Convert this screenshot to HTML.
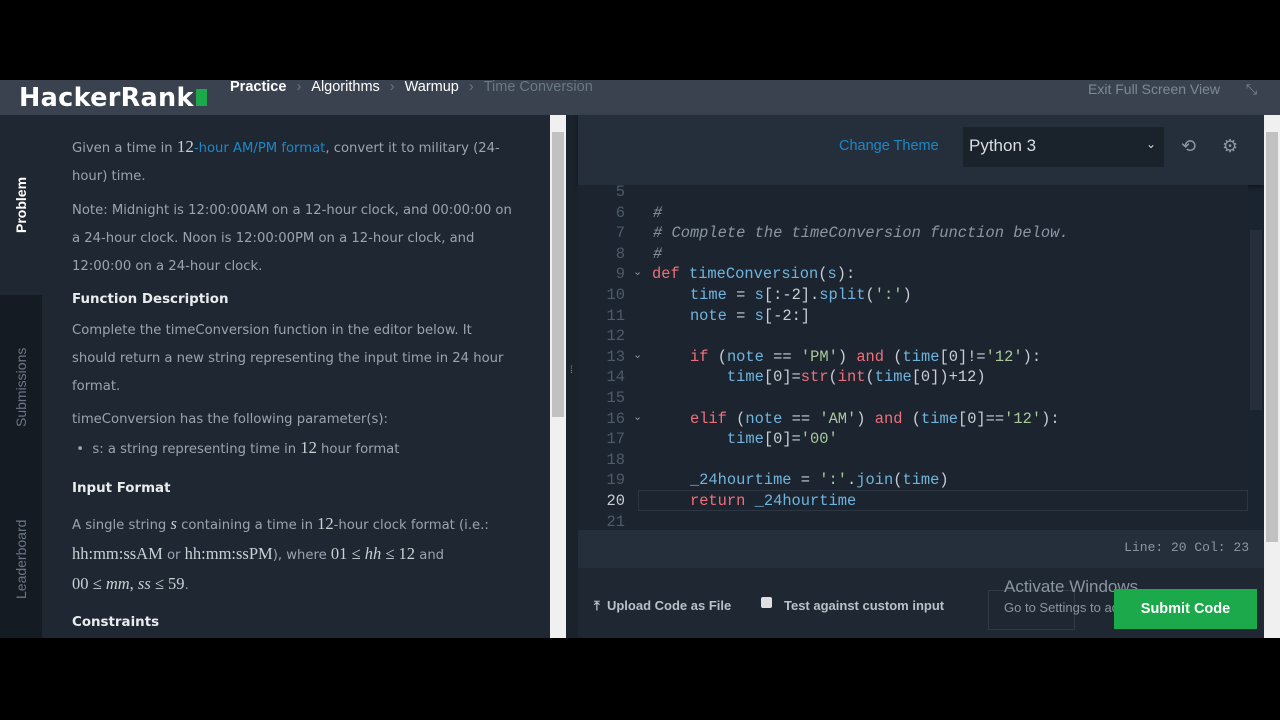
<!DOCTYPE html>
<html><head><meta charset="utf-8"><style>
*{margin:0;padding:0;box-sizing:border-box}
body{width:1280px;height:720px;background:#000;position:relative;overflow:hidden;font-family:"Liberation Sans",sans-serif}
.hdr{position:absolute;left:0;top:80px;width:1280px;height:35px;background:#39424e}
.logo{position:absolute;left:19px;top:3px;font:bold 25.5px "DejaVu Sans",sans-serif;color:#fff;letter-spacing:0.3px}
.logo i{display:inline-block;width:11px;height:17px;background:#1ba94c;margin-left:2px}
.crumb{position:absolute;left:230px;top:0;font-size:14.5px;color:#fff;line-height:15px}
.crumb span{margin-right:10px}.crumb .sep{color:#6b7785}
.exit{position:absolute;left:1088px;top:1px;color:#7c8a96;font-size:14px}
.side{position:absolute;left:0;top:115px;width:42px;height:523px;background:#141b23}
.side div{position:absolute;left:0;width:42px;writing-mode:vertical-rl;transform:rotate(180deg);display:flex;align-items:center;justify-content:center;font-size:14px;color:#6b7785}
.panel{position:absolute;left:42px;top:115px;width:508px;height:523px;background:#1f2732;color:#9aa4ae;font-family:"DejaVu Sans",sans-serif;font-size:13.2px;padding:0 36px 0 30px;overflow:hidden}
.panel p{line-height:28px;margin-top:6px}
.panel h4{color:#e8ecef;font-size:13.4px;margin:8px 0 4px}
.panel a{color:#1e88c7}
.m{font-family:"Liberation Serif",serif;font-size:16.5px;color:#c9d0d6}
.sb{position:absolute;background:#f0f0f0}
.editor{position:absolute;left:578px;top:115px;width:686px;height:523px;background:#1a2330}
.etop{position:absolute;left:0;top:0;width:686px;height:70px;background:#252f3c;box-shadow:0 2px 4px #0006}
.sel{position:absolute;left:385px;top:12px;width:201px;height:40px;background:#1a222c;color:#d8dde2;font-size:17px;padding:9px 6px}
.code{position:absolute;left:0;top:70px;width:670px;height:345px;background:#1c2430;font-family:"Liberation Mono",monospace;font-size:15.4px}
.ln{position:absolute;left:0;width:47px;text-align:right;color:#4f5b68}
.cl{position:absolute;left:75px;white-space:pre;color:#6fb4dc}
.k{color:#f0707a}.s{color:#a9c99a}.p{color:#c8ced4}.c{color:#8b96a1;font-style:italic}
.status{position:absolute;left:0;top:415px;width:686px;height:38px;background:#252f3c;color:#8b96a1;font-family:"Liberation Mono",monospace;font-size:13px;text-align:right;padding:10px 15px}
.bot{position:absolute;left:0;top:453px;width:686px;height:70px;background:#1f2732;color:#b8c0c8;font-size:13px;font-weight:bold}
</style></head><body>
<div class="hdr">
<div class="logo">HackerRank<i></i></div>
<div class="crumb" style="top:0px"><span style="font-weight:bold">Practice</span><span class="sep">›</span><span>Algorithms</span><span class="sep">›</span><span>Warmup</span><span class="sep">›</span><span style="color:#6b7785">Time Conversion</span></div>
<div class="exit">Exit Full Screen View <span style="margin-left:22px">⤡</span></div>
</div>
<div class="side">
<div style="top:0;height:180px;background:#1f2732;color:#fff;font-weight:bold">Problem</div>
<div style="top:180px;height:185px">Submissions</div>
<div style="top:365px;height:158px">Leaderboard</div>
</div>
<div class="panel">
<p style="margin-top:18px">Given a time in <span class="m" style="font-size:17px">12</span><a>-hour AM/PM format</a>, convert it to military (24-hour) time.</p>
<p>Note: Midnight is 12:00:00AM on a 12-hour clock, and 00:00:00 on a 24-hour clock. Noon is 12:00:00PM on a 12-hour clock, and 12:00:00 on a 24-hour clock.</p>
<h4 style="margin-top:11px">Function Description</h4>
<p style="margin-top:10px">Complete the timeConversion function in the editor below. It should return a new string representing the input time in 24 hour format.</p>
<p style="margin-top:5px">timeConversion has the following parameter(s):</p>
<p style="line-height:28px;margin-top:0">&nbsp;• &nbsp;s: a string representing time in <span class="m">12</span> hour format</p>
<h4 style="margin-top:17px">Input Format</h4>
<p style="margin-top:14px">A single string <span class="m"><i>s</i></span> containing a time in <span class="m">12</span>-hour clock format (i.e.: <span class="m">hh:mm:ssAM</span> or <span class="m">hh:mm:ssPM</span>), where <span class="m">01 ≤ <i>hh</i> ≤ 12</span> and<br><span class="m">00 ≤ <i>mm</i>, <i>ss</i> ≤ 59</span>.</p>
<h4 style="margin-top:15px">Constraints</h4>
</div>
<div class="sb" style="left:550px;top:115px;width:16px;height:523px;background:#f0f0f0"></div>
<div class="sb" style="left:552px;top:132px;width:12px;height:285px;background:#c1c1c1"></div>
<div style="position:absolute;left:566px;top:115px;width:12px;height:523px;background:#1a222c"></div>
<div style="position:absolute;left:570px;top:365px;color:#8a9199;font-size:10px">⁞</div>
<div class="editor">
<div class="etop">
<div style="position:absolute;left:261px;top:23px;color:#1e88c7;font-size:14.5px">Change Theme</div>
<div class="sel">Python 3<span style="position:absolute;right:8px;top:10px;font-size:12px">⌄</span></div>
<div style="position:absolute;left:603px;top:21px;color:#8b96a1;font-size:18px">⟲</div>
<div style="position:absolute;left:644px;top:21px;color:#8b96a1;font-size:18px">⚙</div>
</div>
<div class="code">
<div class="ln" style="top:-2px">5</div>
<div class="ln" style="top:18.6px">6</div><div class="cl c" style="top:18.6px">#</div>
<div class="ln" style="top:39.2px">7</div><div class="cl c" style="top:39.2px"># Complete the timeConversion function below.</div>
<div class="ln" style="top:59.8px">8</div><div class="cl c" style="top:59.8px">#</div>
<div class="ln" style="top:80.4px">9</div><div class="cl" style="top:80.4px;left:74px"><span class="k">def</span> timeConversion<span class="p">(</span>s<span class="p">):</span></div>
<div class="ln" style="top:101px">10</div><div class="cl" style="top:101px">    time <span class="p">=</span> s<span class="p">[:-2].</span>split<span class="p">(</span><span class="s">':'</span><span class="p">)</span></div>
<div class="ln" style="top:121.6px">11</div><div class="cl" style="top:121.6px">    note <span class="p">=</span> s<span class="p">[-2:]</span></div>
<div class="ln" style="top:142.2px">12</div>
<div class="ln" style="top:162.8px">13</div><div class="cl" style="top:162.8px">    <span class="k">if</span> <span class="p">(</span>note <span class="p">==</span> <span class="s">'PM'</span><span class="p">)</span> <span class="k">and</span> <span class="p">(</span>time<span class="p">[0]!=</span><span class="s">'12'</span><span class="p">):</span></div>
<div class="ln" style="top:183.4px">14</div><div class="cl" style="top:183.4px">        time<span class="p">[0]=</span><span class="k">str</span><span class="p">(</span><span class="k">int</span><span class="p">(</span>time<span class="p">[0])+12)</span></div>
<div class="ln" style="top:204px">15</div>
<div class="ln" style="top:224.6px">16</div><div class="cl" style="top:224.6px">    <span class="k">elif</span> <span class="p">(</span>note <span class="p">==</span> <span class="s">'AM'</span><span class="p">)</span> <span class="k">and</span> <span class="p">(</span>time<span class="p">[0]==</span><span class="s">'12'</span><span class="p">):</span></div>
<div class="ln" style="top:245.2px">17</div><div class="cl" style="top:245.2px">        time<span class="p">[0]=</span><span class="s">'00'</span></div>
<div class="ln" style="top:265.8px">18</div>
<div class="ln" style="top:286.4px">19</div><div class="cl" style="top:286.4px">    _24hourtime <span class="p">=</span> <span class="s">':'</span><span class="p">.</span>join<span class="p">(</span>time<span class="p">)</span></div>
<div style="position:absolute;left:60px;top:305px;width:610px;height:21px;border:1px solid #2c3643"></div>
<div class="ln" style="top:307px;color:#c8ced4">20</div><div class="cl" style="top:307px">    <span class="k">return</span> _24hourtime</div>
<div class="ln" style="top:327.6px">21</div>
<div style="position:absolute;left:55px;top:80px;color:#8b96a1;font-size:11px;font-family:'DejaVu Sans'">⌄</div>
<div style="position:absolute;left:55px;top:163px;color:#8b96a1;font-size:11px;font-family:'DejaVu Sans'">⌄</div>
<div style="position:absolute;left:55px;top:225px;color:#8b96a1;font-size:11px;font-family:'DejaVu Sans'">⌄</div>
<div style="position:absolute;left:672px;top:45px;width:12px;height:180px;background:#252e3a"></div>
</div>
<div class="status">Line: 20 Col: 23</div>
<div class="bot">
<div style="position:absolute;left:16px;top:30px">⤒ &nbsp;Upload Code as File</div>
<div style="position:absolute;left:183px;top:29px;width:11px;height:11px;background:#e0e0e0;border-radius:2px"></div>
<div style="position:absolute;left:206px;top:30px">Test against custom input</div>
<div style="position:absolute;left:410px;top:22px;width:87px;height:40px;border:1px solid #2f3a46"></div>
<div style="position:absolute;left:426px;top:9px;color:#8b96a1;font-size:17px;font-weight:normal">Activate Windows</div>
<div style="position:absolute;left:426px;top:32px;color:#8b96a1;font-size:13px;font-weight:normal">Go to Settings to acti</div>
<div style="position:absolute;left:536px;top:21px;width:143px;height:40px;background:#1ba94c;color:#fff;font-size:14.5px;text-align:center;line-height:40px">Submit Code</div>
</div>
</div>
<div class="sb" style="left:1264px;top:115px;width:16px;height:523px"></div>
<div class="sb" style="left:1266px;top:132px;width:12px;height:410px;background:#c1c1c1"></div>
</body></html>
